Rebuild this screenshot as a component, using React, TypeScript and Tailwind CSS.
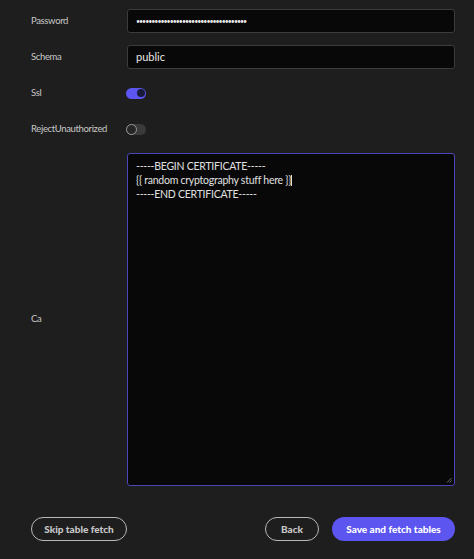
import React from "react";

const font = { fontFamily: '"Lato", "Liberation Sans", sans-serif' };

function Label({ children }: { children: React.ReactNode }) {
  return <div className="w-[96px] shrink-0 text-[9.5px] tracking-[-0.35px] text-[#c8c8c8]">{children}</div>;
}

function Toggle({ on }: { on: boolean }) {
  return on ? (
    <div className="ml-[-1px] w-[20px] h-[11px] rounded-full bg-[#5c55f0] flex items-center justify-end pr-[1.5px]">
      <div className="w-[8px] h-[8px] rounded-full bg-[#1a1a3a]" />
    </div>
  ) : (
    <div className="ml-[-1px] w-[20px] h-[11px] rounded-full bg-[#3a3a3a] flex items-center">
      <div className="w-[11px] h-[11px] rounded-full border-[1.5px] border-[#9a9a9a] bg-[#262626]" />
    </div>
  );
}

export default function App() {
  return (
    <div style={font} className="w-[474px] h-[559px] bg-[#1e1e1e] pl-[31px] pr-[19px] pt-[9px] flex flex-col">
      <div className="flex items-center h-[24px]">
        <Label>Password</Label>
        <div className="flex-1 h-[24px] rounded-[3px] bg-[#080808] border border-[#3c3c3c] flex items-center px-[8px] text-[7px] text-[#e8e8e8] tracking-[-1px] overflow-hidden whitespace-nowrap">
          {"•".repeat(36)}
        </div>
      </div>
      <div className="flex items-center h-[24px] mt-[12px]">
        <Label>Schema</Label>
        <div className="flex-1 h-[24px] rounded-[3px] bg-[#080808] border border-[#3c3c3c] flex items-center px-[8px] text-[11px] text-[#e8e8e8]">
          public
        </div>
      </div>
      <div className="flex items-center h-[24px] mt-[12px]">
        <Label>Ssl</Label>
        <Toggle on />
      </div>
      <div className="flex items-center h-[24px] mt-[12px]">
        <Label>RejectUnauthorized</Label>
        <Toggle on={false} />
      </div>
      <div className="flex items-center h-[333px] mt-[12px]">
        <Label>Ca</Label>
        <div className="relative flex-1 h-[333px] rounded-[3px] bg-[#080808] border border-[#4c46b8] px-[8px] pt-[5px] text-[10.5px] tracking-[-0.25px] leading-[14px] text-[#e0e0e0]">
          <div>-----BEGIN CERTIFICATE-----</div>
          <div className="flex items-center">
            {"{{ random cryptography stuff here }}"}
            <span className="inline-block w-[1px] h-[11px] bg-[#e0e0e0]" />
          </div>
          <div>-----END CERTIFICATE-----</div>
          <svg className="absolute right-[2px] bottom-[2px]" width="6" height="6" viewBox="0 0 6 6">
            <path d="M5.5 1 L1 5.5 M5.5 3.5 L3.5 5.5" stroke="#8a8a8a" strokeWidth="0.8" />
          </svg>
        </div>
      </div>
      <div className="flex items-center mt-[31px] h-[24px]">
        <button className="h-[24px] w-[96px] rounded-full border-[1.5px] border-[#b8b8b8] text-[10px] font-black text-[#c8c8c8]">
          Skip table fetch
        </button>
        <div className="flex-1" />
        <button className="h-[24px] w-[54px] rounded-full border-[1.5px] border-[#b8b8b8] text-[10px] font-black text-[#c8c8c8]">
          Back
        </button>
        <button className="ml-[13px] h-[24px] w-[123px] rounded-full bg-[#5c55f0] text-[10px] font-black text-white">
          Save and fetch tables
        </button>
      </div>
    </div>
  );
}
